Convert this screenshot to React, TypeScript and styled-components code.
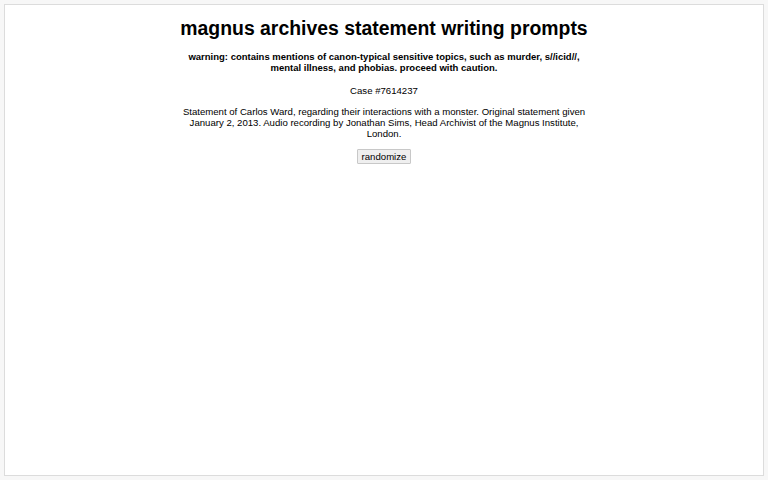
import React from 'react'
import styled, { createGlobalStyle } from 'styled-components'

const GlobalStyle = createGlobalStyle`
    html, body {
        margin: 0;
        padding: 0;
        background: #f7f7f7;
    }
    body {
        padding: 4px;
        box-sizing: border-box;
        height: 100vh;
        font-family: "Liberation Sans", Arial, sans-serif;
        color: #000;
    }
    #root {
        height: 100%;
    }
`

const Page = styled.div`
    height: 100%;
    box-sizing: border-box;
    background: #fff;
    border: 1px solid #dcdcdc;
    display: flex;
    justify-content: center;
`

const Content = styled.main`
    width: 412px;
    display: flex;
    flex-direction: column;
    align-items: center;
    text-align: center;
    padding-top: 12px;
`

const Title = styled.h1`
    margin: 0;
    font-size: 19.4px;
    line-height: 22px;
    font-weight: bold;
    white-space: nowrap;
`

const Warning = styled.p`
    margin: 12px 0 0;
    font-size: 9.5px;
    line-height: 11px;
    font-weight: bold;
`

const Text = styled.p<{ $gap: number }>`
    margin: ${p => p.$gap}px 0 0;
    font-size: 9.6px;
    line-height: 11px;
`

const Button = styled.button`
    margin-top: 10px;
    font-family: "Liberation Sans", Arial, sans-serif;
    font-size: 9.6px;
    line-height: 11px;
    padding: 1px 4px;
    background: #efefef;
    border: 1px solid #c8c8c8;
    border-radius: 1px;
    color: #000;
`

const statements = [
    {
        caseNo: 7614237,
        text: 'Statement of Carlos Ward, regarding their interactions with a monster. Original statement given January 2, 2013. Audio recording by Jonathan Sims, Head Archivist of the Magnus Institute, London.',
    },
]

const App: React.FC = () => {
    const [idx, setIdx] = React.useState(0)
    const s = statements[idx]
    return (
        <>
            <GlobalStyle />
            <Page>
                <Content>
                    <Title>magnus archives statement writing prompts</Title>
                    <Warning>
                        warning: contains mentions of canon-typical sensitive topics, such as murder, s//icid//,
                        mental illness, and phobias. proceed with caution.
                    </Warning>
                    <Text $gap={12}>Case #{s.caseNo}</Text>
                    <Text $gap={10}>{s.text}</Text>
                    <Button onClick={() => setIdx((idx + 1) % statements.length)}>randomize</Button>
                </Content>
            </Page>
        </>
    )
}

export default App
